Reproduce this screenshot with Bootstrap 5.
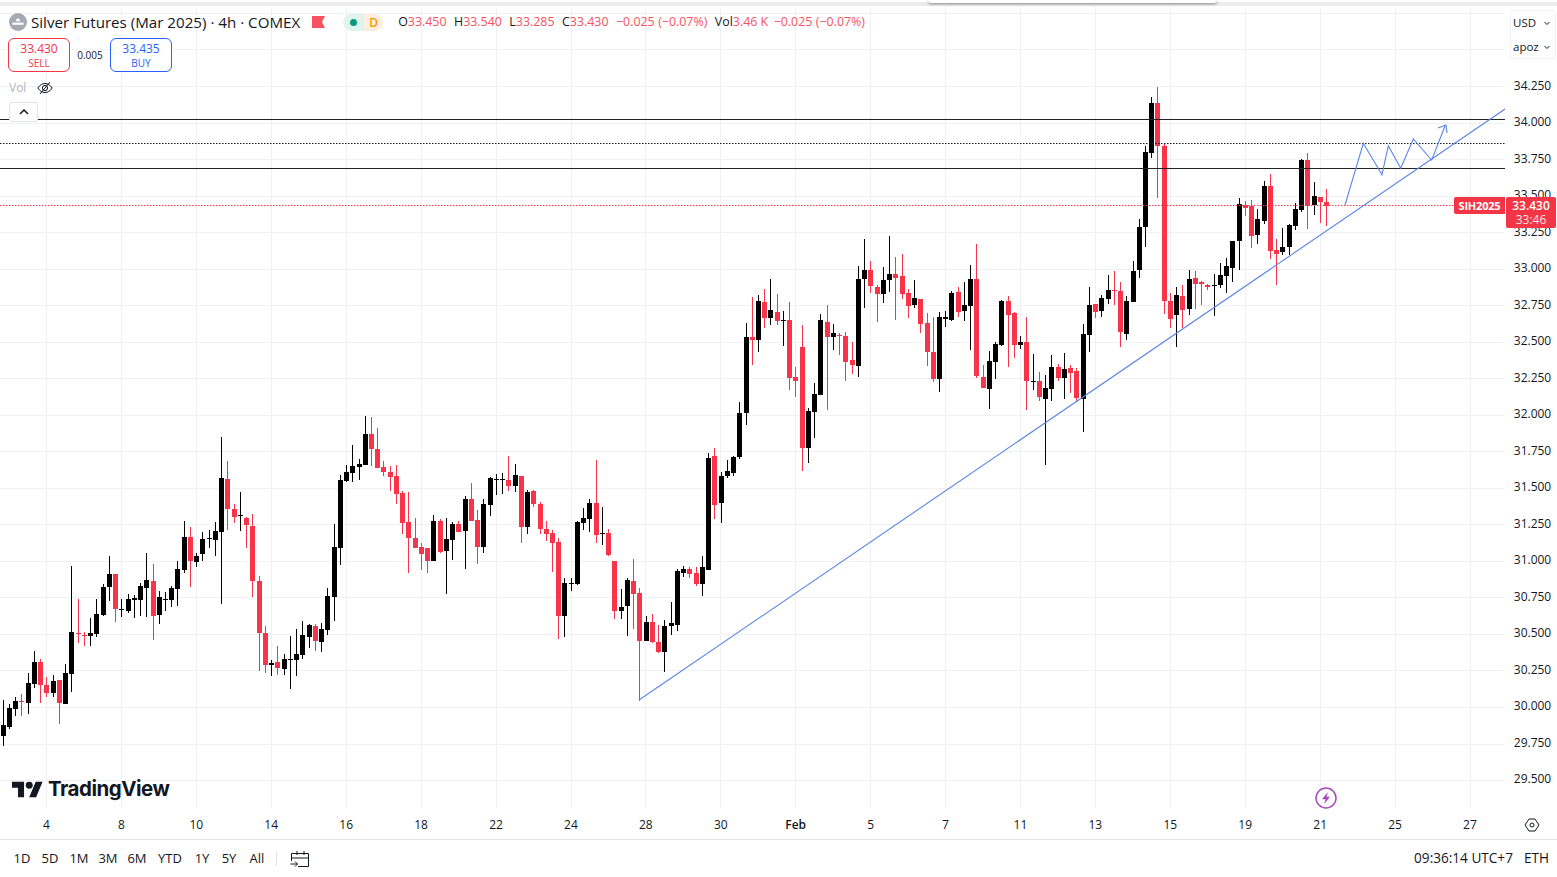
<!DOCTYPE html>
<html lang="en">
<head>
<meta charset="utf-8">
<title>Silver Futures (Mar 2025)</title>
<link href="https://cdn.jsdelivr.net/npm/bootstrap@5.3.0/dist/css/bootstrap.min.css" rel="stylesheet">
<style>
html,body{height:877px;overflow:hidden;background:#fff}
body{font-family:"Open Sans","Liberation Sans",sans-serif;color:#131722;font-size:12px;width:1557px}
.top-strip{height:7px;padding-top:2px;position:relative}
.top-strip-fill{height:4px;background:#ececec}
.top-tab{position:absolute;left:928px;width:289px;top:0;height:3px;background:#fff;border-radius:0 0 6px 6px;box-shadow:0 1px 3px rgba(0,0,0,.45)}
.chart-row{height:801px;position:relative}
.plot-area{width:1505px;height:801px;position:relative}
.plot-area svg{display:block}
.price-axis{width:52px;padding-top:60.7px}
.price-tick{height:36.53px;line-height:36.53px;text-align:center;font-size:12px;color:#131722;padding-left:3px}
.legend-box{position:absolute;left:9px;top:6px}
.legend-title{font-size:15.15px;line-height:18px;color:#131722;white-space:nowrap}
.sym-badge{width:18px;height:18px;margin-right:4px;flex:none}
.flag-icon{margin-left:12px;flex:none}
.status-pill{margin-left:18px;height:17px;width:40px;border-radius:9px;overflow:hidden;flex:none}
.pill-left{width:21px;background:#dff3ef;border-radius:9px 0 0 9px}
.pill-right{width:19px;background:#fdeedd;color:#ff9800;font-size:12px;font-weight:600;line-height:17px;text-align:center}
.pill-dot{width:7px;height:7px;border-radius:50%;background:#089981;margin:5px 0 0 7px}
.ohlc{margin-left:15px;font-size:12.4px;line-height:18px;white-space:nowrap;color:#131722}
.ohlc b{font-weight:400;color:#f7525f;margin-right:7.5px}
.ohlc b.chg-val{margin-right:3.5px}
.ohlc b.vol-val{margin-right:5.5px}
.ohlc b.tight{margin-right:0}
.trade-row{margin-top:7px}
.trade-btn{width:62px;height:34px;border:1px solid;border-radius:6px;background:#fff;text-align:center;font-size:12px;line-height:14px;padding-top:3px}
.trade-btn small{display:block;font-size:10px;line-height:14px}
.sell-btn{border-color:#f23645;color:#f23645}
.buy-btn{border-color:#2962ff;color:#2962ff}
.spread-val{width:40px;text-align:center;font-size:10px}
.vol-row{margin-top:8px;color:#b2b5be;font-size:12px;line-height:16px;margin-left:0}
.vol-row svg{margin-left:11px}
.collapse-btn{margin-top:6px;width:29px;height:20px;border:1px solid #e0e3eb;border-radius:3px;background:#fff;display:flex;align-items:center;justify-content:center}
.unit-box{position:absolute;left:1510px;top:3px;width:46px;height:49px;background:#fff;border:1px solid #f0f3fa;border-radius:4px;font-size:11.5px;padding:0 4px 0 2px}
.unit-line{height:24px;line-height:24px}
.last-price{position:absolute;left:1454px;top:190px}
.last-sym{width:51px;height:17px;background:#f23645;color:#fff;font-size:11px;font-weight:700;line-height:17px;text-align:center;border-radius:2px 0 0 2px;letter-spacing:-.2px}
.last-val{margin-left:1px;width:50px;height:31px;background:#f23645;color:#fff;font-size:12px;font-weight:600;line-height:14px;text-align:center;padding-top:2px;border-radius:2px}
.last-val span{display:block;font-weight:400;color:#fde3e5}
.bolt-badge{position:absolute;left:1315px;top:780px}
.tv-logo{position:absolute;left:12px;top:772px;height:20px;color:#131722}
.tv-word{font-family:"Inter","Liberation Sans",sans-serif;font-weight:700;font-size:20.5px;line-height:20px;letter-spacing:-.5px;margin-left:5px}
.time-axis{height:32px;border-bottom:1px solid #e0e3eb;padding-left:9px;position:relative}
.time-tick{width:74.93px;text-align:center;line-height:34px;font-size:12px}
.time-tick.month{font-weight:600}
.gear-icon{position:absolute;left:1524px;top:9px}
.range-bar{height:37px;padding:0 8px 0 0}
.range-item{text-align:center;line-height:37px;font-size:13px}
.range-sep{width:1px;height:14px;background:#e0e3eb;margin:0 13px 0 0}
.clock-box{font-size:13.6px}
</style>
</head>
<body>
<div class="top-strip"><div class="top-strip-fill"></div><div class="top-tab"></div></div>

<div class="chart-row d-flex">
  <div class="plot-area" id="plot"></div>
  <div class="price-axis d-flex flex-column">
    <div class="price-tick">34.250</div><div class="price-tick">34.000</div><div class="price-tick">33.750</div><div class="price-tick">33.500</div><div class="price-tick">33.250</div>
    <div class="price-tick">33.000</div><div class="price-tick">32.750</div><div class="price-tick">32.500</div><div class="price-tick">32.250</div><div class="price-tick">32.000</div>
    <div class="price-tick">31.750</div><div class="price-tick">31.500</div><div class="price-tick">31.250</div><div class="price-tick">31.000</div><div class="price-tick">30.750</div>
    <div class="price-tick">30.500</div><div class="price-tick">30.250</div><div class="price-tick">30.000</div><div class="price-tick">29.750</div><div class="price-tick">29.500</div>
  </div>

  <div class="legend-box">
    <div class="d-flex align-items-center">
      <svg class="sym-badge" viewBox="0 0 18 18"><circle cx="9" cy="9" r="9" fill="#a6a9b2"/><path d="M6.6 8.3 8 5.6h2l1.4 2.7z" fill="#fff"/><rect x="3.4" y="9.6" width="11.2" height="2.2" fill="#fff"/></svg>
      <span class="legend-title">Silver Futures (Mar 2025) · 4h · COMEX</span>
      <svg class="flag-icon" width="13" height="12" viewBox="0 0 13 12"><path d="M0 0h13l-3 6 3 6H0z" fill="#f7525f"/></svg>
      <div class="status-pill d-flex"><div class="pill-left"><div class="pill-dot"></div></div><div class="pill-right">D</div></div>
      <div class="ohlc">O<b>33.450</b>H<b>33.540</b>L<b>33.285</b>C<b>33.430</b><b class="chg-val">−0.025</b><b>(−0.07%)</b>Vol<b class="vol-val">3.46 K</b><b class="chg-val">−0.025</b><b class="tight">(−0.07%)</b></div>
    </div>
    <div class="trade-row d-flex" style="margin-left:-1px">
      <div class="trade-btn sell-btn">33.430<small>SELL</small></div>
      <div class="spread-val align-self-center">0.005</div>
      <div class="trade-btn buy-btn">33.435<small>BUY</small></div>
    </div>
    <div class="vol-row d-flex align-items-center">Vol
      <svg width="16" height="14" viewBox="0 0 16 14" fill="none" stroke="#131722" stroke-width="1"><path d="M.8 7C3 3.8 5.3 2.5 8 2.5s5 1.3 7.2 4.5c-2.2 3.2-4.500 4.500-7.200 4.500S3 10.200.8 7z"/><circle cx="8" cy="7" r="2.600"/><path d="M13 1 3 13"/></svg>
    </div>
    <div class="collapse-btn"><svg width="10" height="6" viewBox="0 0 10 6" fill="none" stroke="#131722" stroke-width="1.500"><path d="M1 5l4-4 4 4"/></svg></div>
  </div>

  <div class="unit-box">
    <div class="d-flex justify-content-between unit-line"><span>USD</span><svg width="8" height="24" viewBox="0 0 8 24" fill="none" stroke="#131722"><path d="M1.500 11l2.500 2.500L6.500 11"/></svg></div>
    <div class="d-flex justify-content-between unit-line"><span>apoz</span><svg width="8" height="24" viewBox="0 0 8 24" fill="none" stroke="#131722"><path d="M1.500 11l2.500 2.500L6.500 11"/></svg></div>
  </div>

  <div class="last-price d-flex align-items-start">
    <div class="last-sym">SIH2025</div>
    <div class="last-val">33.430<span>33:46</span></div>
  </div>

  <svg class="bolt-badge" width="22" height="22" viewBox="0 0 22 22"><circle cx="11" cy="11" r="10" fill="#fff" stroke="#ab47bc" stroke-width="1.500"/><path d="M12.800 5 7 12.300h3.500L9.200 17l5.800-7.300h-3.500z" fill="#ab47bc"/></svg>

  <div class="tv-logo d-flex align-items-center">
    <svg width="31" height="17" viewBox="0 4 36 18" fill="#131722"><path d="M14 22H7V11H0V4h14v18zM28 22h-8l7.500-18h8L28 22z"/><circle cx="20" cy="8" r="4"/></svg>
    <span class="tv-word">TradingView</span>
  </div>
</div>

<div class="time-axis d-flex">
  <div class="time-tick">4</div><div class="time-tick">8</div><div class="time-tick">10</div><div class="time-tick">14</div><div class="time-tick">16</div>
  <div class="time-tick">18</div><div class="time-tick">22</div><div class="time-tick">24</div><div class="time-tick">28</div><div class="time-tick">30</div>
  <div class="time-tick month">Feb</div><div class="time-tick">5</div><div class="time-tick">7</div><div class="time-tick">11</div><div class="time-tick">13</div>
  <div class="time-tick">15</div><div class="time-tick">19</div><div class="time-tick">21</div><div class="time-tick">25</div><div class="time-tick">27</div>
  <svg class="gear-icon" width="16" height="16" viewBox="0 0 16 16" fill="none" stroke="#131722"><path d="M5 2h6l4 6-4 6H5L1 8z" stroke-linejoin="round"/><circle cx="8" cy="8" r="2"/></svg>
</div>

<div class="range-bar d-flex align-items-center">
  <div class="range-item" style="width:44px">1D</div>
  <div class="range-item" style="margin-left:-6px;width:24px">5D</div>
  <div class="range-item" style="margin-left:4px;width:26px">1M</div>
  <div class="range-item" style="margin-left:3px;width:26px">3M</div>
  <div class="range-item" style="margin-left:3px;width:26px">6M</div>
  <div class="range-item" style="margin-left:6px;width:28px">YTD</div>
  <div class="range-item" style="margin-left:7px;width:22px">1Y</div>
  <div class="range-item" style="margin-left:5px;width:22px">5Y</div>
  <div class="range-item" style="margin-left:5px;width:24px">All</div>
  <div class="range-sep" style="margin-left:7px"></div>
  <svg width="20" height="18" viewBox="0 0 20 18" fill="none" stroke="#131722"><path d="M1.500 3.500h17v13H8M1.500 3.500V11M1.500 8h17M7 1v4M14 1v4M.5 14h7M5 11.500 7.500 14 5 16.500"/></svg>
  <div class="clock-box ms-auto d-flex"><span>09:36:14 UTC+7</span><span style="margin-left:11px">ETH</span></div>
</div>

<script>
const groups=[
[0,420,`10 k 840 915 947 977|28 k 852 864 920 928|46 k 831 843 866 887|64 r 822 843 846 888|85 k 760 790 848 882|103 k 693 727 791 803|121 r 717 727 796 848|139 r 772 796 818 830|160 k 766 784 818 830|178 r 780 780 848 912|196 k 733 760 851 852|214 k 438 637 761 815|235 r 537 639 642 670|253 r 636 645 648 679|271 k 595 639 647 677|289 k 537 583 641 650|310 k 493 501 585 588|328 k 408 462 500 543|346 r 462 462 566 607|364 k 537 567 570 590|385 k 523 538 572 578|403 k 526 534 539 593|421 k 490 498 539 588|439 k 399 480 503 590|460 r 431 483 587 660|478 k 513 531 584 611|496 k 516 537 540 572|514 k 498 504 539 560|532 k 423 447 506 557|553 k 304 351 449 460|571 r 321 351 424 500|589 k 400 408 426 440|607 k 336 357 401 422|628 k 330 353 356 383|646 k 306 333 360 408|664 k 52 174 335 551|682 r 123 177 266 329|703 r 252 267 290 309|721 k 216 285 288 332|739 r 291 294 314 384|757 r 282 318 482 530|778 r 468 483 640 752|796 r 617 640 734 758|814 k 720 729 734 767|832 r 677 727 743 765|853 k 702 717 746 764|871 k 648 717 720 806|889 k 627 702 719 767|907 k 603 645 705 717|928 k 612 615 650 684|946 r 612 618 663 692|964 k 609 627 665 695|982 k 504 528 630 645|1003 k 312 381 530 603|1021 k 165 180 383 434|1039 k 135 156 183 187`],
[350,400,`7 k 135 198 218 245|28 k 178 192 201 240|46 k 48 102 195 195|64 r 52 102 146 198|82 r 83 148 203 205|100 r 183 201 216 227|121 r 198 216 231 273|139 r 195 228 281 312|157 r 273 279 368 402|175 r 276 366 413 520|196 r 353 414 443 444|214 r 429 441 461 510|232 r 444 444 483 520|250 k 345 363 483 483|271 r 358 363 456 458|289 k 354 417 452 582|307 k 365 372 419 480|325 r 363 372 395 396|346 k 288 297 392 507|364 r 248 297 362 362|382 r 330 360 440 492|400 k 297 312 441 459|421 k 231 234 314 348|439 k 222 237 240 285|457 k 219 237 240 282|475 r 168 240 258 273|496 k 192 225 258 276|514 r 228 228 381 430|532 k 270 276 381 402|550 r 270 273 312 322|571 r 306 312 387 402|589 r 362 387 402 423|607 r 390 399 428 516|625 r 414 426 648 716|643 k 534 549 648 711|664 k 534 549 552 573|682 k 363 366 552 556|700 k 324 354 369 390|718 k 297 309 356 396|739 r 179 309 404 428|757 k 321 399 402 435|775 r 387 399 465 468|793 r 483 483 632 657|814 k 567 621 633 657|832 k 534 540 618 708|850 r 477 543 582 688|868 r 564 579 723 902|889 k 648 666 723 723|907 r 642 666 726 729|925 r 675 726 757 759|943 k 660 678 756 816|964 k 606 669 678 705|982 k 507 513 675 693|1000 k 498 507 519 531|1018 r 501 507 522 534|1039 r 501 519 553 558|1057 k 468 501 552 588|1075 k 159 174 510 510|1093 r 144 168 315 358|1114 k 216 228 309 369|1132 k 180 213 228 234|1150 k 168 171 219 228|1168 k 6 39 172 177`],
[730,220,`49 k 309 351 579 615|67 r 231 351 359 435|85 k 225 243 360 396|103 r 208 246 293 324|121 k 177 270 294 315|142 r 222 276 303 315|160 k 273 300 303 378|178 r 246 300 473 510|196 r 441 471 483 530|217 r 315 381 684 753|235 k 564 573 684 729|253 k 489 522 576 654|271 k 282 300 525 525|292 r 254 306 351 570|310 k 312 339 351 390|328 r 339 344 347 405|346 r 336 348 426 483|367 r 366 420 435 462|385 k 138 177 438 471|403 k 57 150 177 264|421 r 122 150 198 220|442 r 195 201 222 306|460 k 141 180 222 249|478 k 48 162 180 216|496 r 110 162 174 300|517 r 101 168 222 237|535 r 208 219 258 295|553 k 180 234 255 264|571 r 237 237 312 340|592 r 279 309 396 438|610 r 291 396 477 486|628 k 276 291 477 516|646 k 273 291 297 321|664 k 213 219 300 303|685 r 201 216 276 291|703 k 186 255 273 303|721 k 135 177 258 390|739 r 72 177 468 474|760 r 435 471 504 504|778 k 393 423 507 567|796 k 366 372 426 477|814 k 240 243 375 378|835 r 228 243 285 441|853 r 276 279 375 414|871 k 348 366 375 387|889 r 291 366 483 570|910 k 402 483 486 510|928 r 456 483 531 543|946 k 465 504 537 735`],
[1030,80,`64 k 825 861 927 963|85 r 852 861 894 903|103 k 819 867 894 957|121 r 855 864 879 939|139 r 864 873 954 963|160 k 732 762 957 1056|178 k 621 675 765 816|196 r 672 672 696 714|214 k 645 654 693 711|235 k 585 630 657 672|253 r 573 630 633 675|271 r 606 633 756 801|289 k 648 663 762 780|310 k 543 573 666 667|328 k 417 441 570 594|346 k 198 216 441 501|364 k 51 69 219 234|382 r 21 69 198 354|403 r 192 198 663 702|421 r 639 663 717 744|439 k 621 645 705 801|457 r 615 648 690 744|478 k 570 597 687 705|496 r 573 594 612 687|514 r 603 607 611 675|532 r 612 615 622 630|553 k 582 615 618 708|571 k 549 585 615 624|589 k 534 558 588 639|607 k 483 483 564 606|628 k 354 372 483 570|646 r 363 375 384 408|664 r 360 378 468 504|682 k 387 417 465 492|703 k 303 318 423 432|721 r 282 318 513 537|739 r 477 510 522 615|757 k 444 501 516 525|778 k 432 435 501 525|796 k 369 387 438 450|814 k 237 240 390 396|832 r 219 240 378 447|853 k 306 348 375 405|871 r 351 351 366 429|889 r 327 366 378 438`]
];
let s='<svg xmlns="http://www.w3.org/2000/svg" width="1505" height="801" viewBox="0 7 1505 801">';
let g='';
for(let k=0;k<20;k++)g+=`<rect x="${Math.round(46+74.93*k)}" y="7" width="1" height="801"/>`;
for(let k=-2;k<=20;k++){const y=Math.round(86+36.53*k);if(y<808)g+=`<rect x="0" y="${y}" width="1505" height="1"/>`;}
s+=`<g fill="#f0f1f4">${g}</g>`;
let ck='',cr='';
for(const [ox,oy,rows] of groups){
  for(const row of rows.split('|')){
    const p=row.split(' ');
    const x=Math.floor(ox+(+p[0])/3);
    const v=p.slice(2).map(n=>Math.round(oy+n/3));
    const bh=Math.max(1,v[2]-v[1]);
    const r=`<rect x="${x}" y="${v[0]}" width="1" height="${v[3]-v[0]}"/><rect x="${x-2}" y="${v[1]}" width="5" height="${bh}"/>`;
    if(p[1]==='k')ck+=r;else cr+=r;
  }
}
s+=`<g shape-rendering="crispEdges"><g fill="#000">${ck}</g><g fill="#f7344a">${cr}</g></g>`;
s+='<g stroke-width="1"><path d="M0 119.500H1505M0 168.500H1505" stroke="#222" shape-rendering="crispEdges"/><path d="M0 143.500H1505" stroke="#131722" stroke-dasharray="1.500 1.500"/><path d="M0 205.500H1505" stroke="#f23645" stroke-dasharray="1.500 1.500"/></g>';
s+='<g fill="none" stroke="#5b85e6" stroke-width="1.100"><path d="M639 700 1505 109"/><path d="M1345 205 1363.300 143.300 1382 174.700 1388.300 145.700 1400.700 168.300 1413.300 139 1431.700 160 1445 126"/><path d="M1438 128 1446 125 1447 133"/></g>';
s+='</svg>';
document.getElementById('plot').innerHTML=s;
</script>
<script src="https://cdn.jsdelivr.net/npm/bootstrap@5.3.0/dist/js/bootstrap.bundle.min.js"></script>
</body>
</html>
